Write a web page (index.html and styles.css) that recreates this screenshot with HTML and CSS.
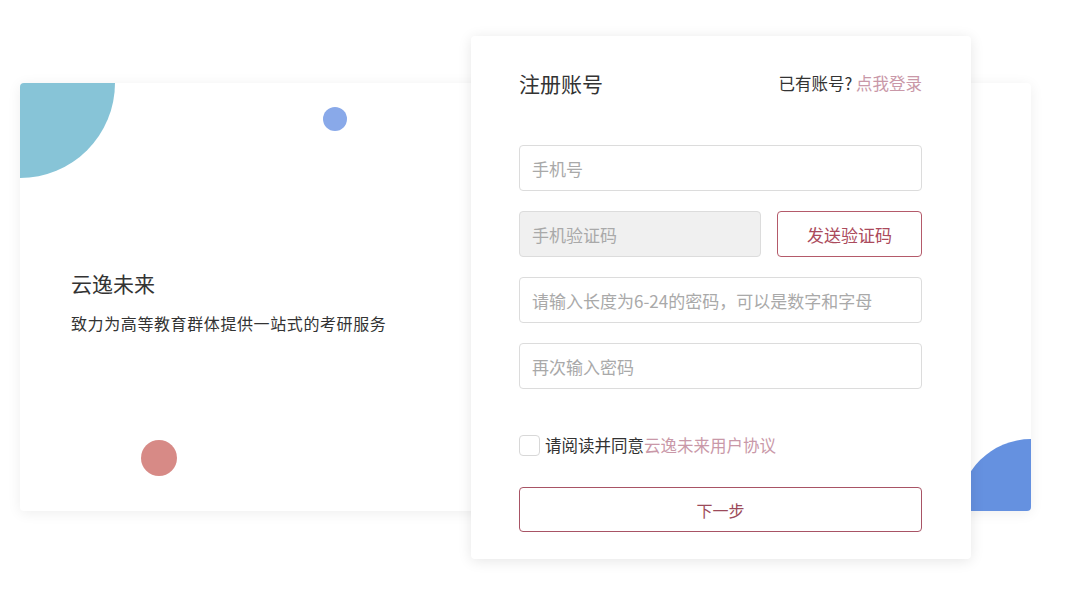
FILE: index.html
```html
<!DOCTYPE html>
<html lang="zh-CN">
<head>
  <meta charset="utf-8">
  <title>注册账号 - 云逸未来</title>
  <link rel="stylesheet" href="styles.css">
</head>
<body>

<div class="stage">

  <div class="intro">
    <span class="dot dot-teal"></span>
    <span class="dot dot-blue"></span>
    <span class="dot dot-red"></span>
    <span class="dot dot-corner"></span>
    <h2>云逸未来</h2>
    <p>致力为高等教育群体提供一站式的考研服务</p>
  </div>

  <form class="register">
    <div class="head">
      <h3>注册账号</h3>
      <span class="login">已有账号? <a href="#">点我登录</a></span>
    </div>

    <input class="field" type="text" placeholder="手机号">

    <div class="code-row">
      <input class="field field-grey" type="text" placeholder="手机验证码">
      <button class="btn-code" type="button">发送验证码</button>
    </div>

    <input class="field" type="password" placeholder="请输入长度为6-24的密码，可以是数字和字母">
    <input class="field" type="password" placeholder="再次输入密码">

    <label class="agree">
      <span class="box"></span>
      请阅读并同意<a href="#">云逸未来用户协议</a>
    </label>

    <button class="btn-next" type="button">下一步</button>
  </form>

</div>

</body>
</html>
```

FILE: styles.css
```css
* {
	box-sizing: border-box;
}

body {
	margin: 0;
	background: #ffffff;
	font-family: "Noto Sans CJK SC", "Noto Sans", sans-serif;
	color: #333333;
}

.stage {
	position: relative;
	width: 1080px;
	height: 591px;
	padding: 83px 0 0 20px;
}

/* back card */
.intro {
	position: relative;
	width: 1011px;
	height: 428px;
	background: #ffffff;
	border-radius: 4px;
	box-shadow: 0 2px 14px rgba(0, 0, 0, 0.07);
	overflow: hidden;
	padding: 186px 0 0 51px;
}

.intro h2 {
	margin: 0;
	font-size: 21px;
	font-weight: normal;
	line-height: 28px;
	color: #333333;
}

.intro p {
	margin: 15px 0 0 0;
	font-size: 16px;
	line-height: 22px;
	letter-spacing: 0.6px;
	color: #333333;
}

.dot {
	position: absolute;
	border-radius: 50%;
}

.dot-teal {
	width: 190px;
	height: 190px;
	left: -95px;
	top: -95px;
	background: #87c4d7;
}

.dot-blue {
	width: 24px;
	height: 24px;
	left: 303px;
	top: 24px;
	background: #89a9e9;
}

.dot-red {
	width: 36px;
	height: 36px;
	left: 121px;
	top: 357px;
	background: #d78a86;
}

.dot-corner {
	width: 144px;
	height: 144px;
	right: -72px;
	bottom: -72px;
	background: #6591e0;
}

/* register card */
.register {
	position: absolute;
	left: 471px;
	top: 36px;
	width: 500px;
	height: 523px;
	background: #ffffff;
	border-radius: 4px;
	box-shadow: 0 2px 14px rgba(0, 0, 0, 0.1);
	padding: 32px 49px 0 48px;
	display: flex;
	flex-direction: column;
	gap: 20px;
}

.head {
	display: flex;
	justify-content: space-between;
	align-items: center;
	height: 30px;
	margin-bottom: 27px;
}

.head h3 {
	margin: 0;
	font-size: 21px;
	font-weight: normal;
	color: #333333;
}

.login {
	font-size: 16.5px;
	color: #333333;
}

.login a,
.agree a {
	color: #c998a8;
	text-decoration: none;
}

.field {
	width: 100%;
	height: 46px;
	border: 1px solid #dcdcdc;
	border-radius: 4px;
	padding: 0 12px;
	font-family: inherit;
	font-size: 17px;
	color: #333333;
	background: #ffffff;
	outline: none;
}

.field::placeholder {
	color: #a9a9a9;
}

.field-grey {
	background: #f0f0f0;
	width: 242px;
}

.code-row {
	display: flex;
	justify-content: space-between;
}

.btn-code {
	width: 145px;
	height: 46px;
	border: 1px solid #b45a6a;
	border-radius: 4px;
	background: #ffffff;
	color: #ab4a5c;
	font-family: inherit;
	font-size: 17px;
}

.agree {
	display: flex;
	align-items: center;
	height: 22px;
	margin-top: 25px;
	font-size: 16.5px;
	color: #333333;
}

.box {
	width: 21px;
	height: 21px;
	border: 1px solid #d8d8d8;
	border-radius: 4px;
	margin-right: 5px;
}

.btn-next {
	width: 100%;
	height: 45px;
	margin-top: 11px;
	border: 1px solid #a85465;
	border-radius: 4px;
	background: #ffffff;
	color: #9c4a5a;
	font-family: inherit;
	font-size: 16px;
}
```
